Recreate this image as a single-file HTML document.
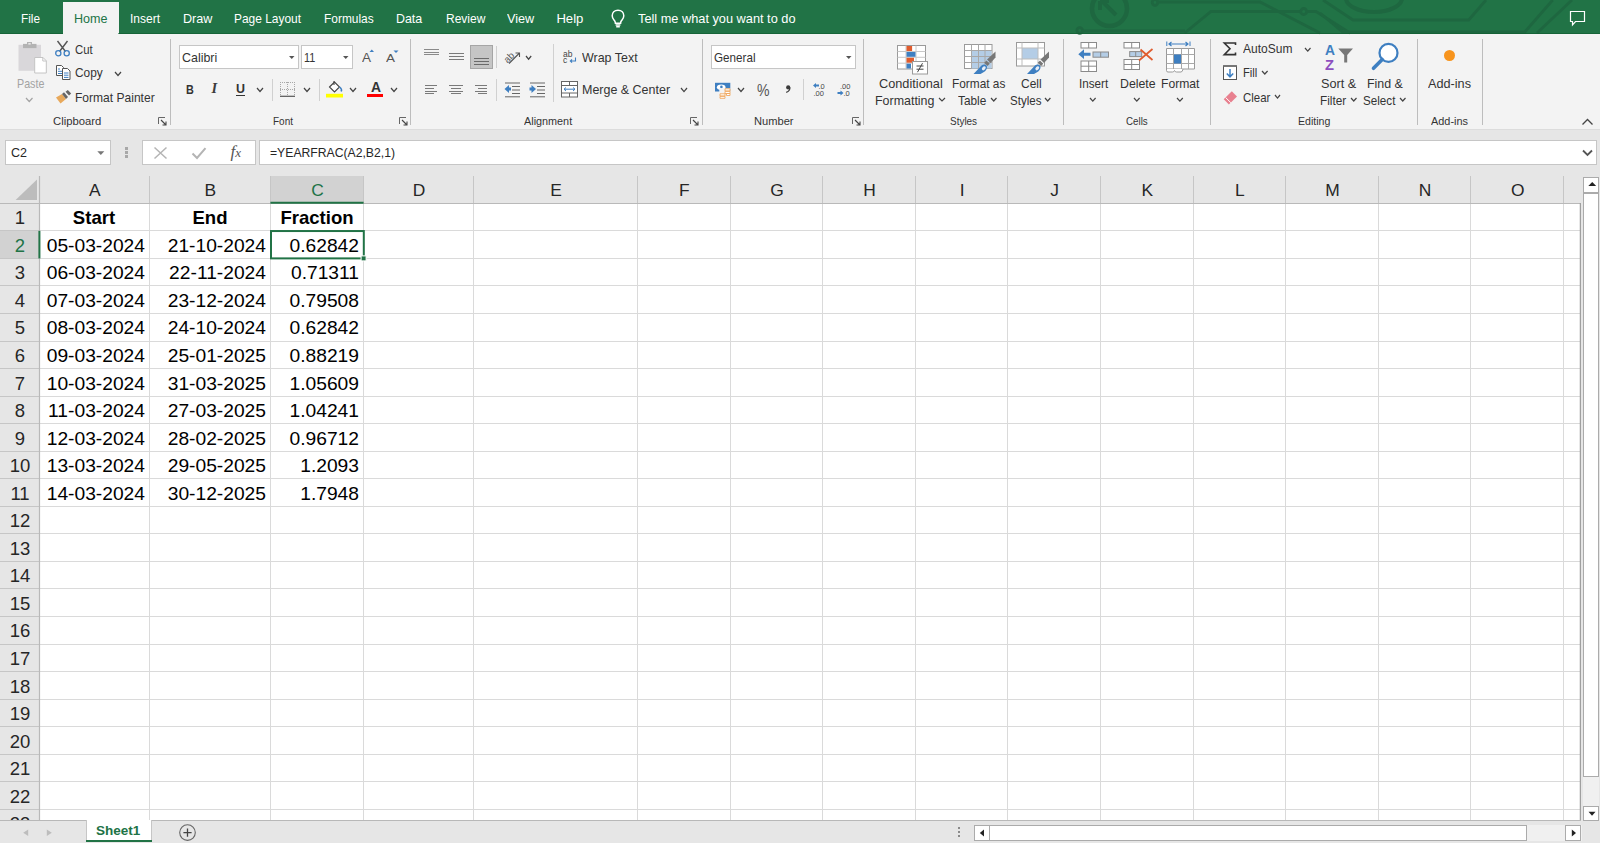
<!DOCTYPE html><html><head><meta charset="utf-8"><style>
*{box-sizing:border-box}
html,body{margin:0;padding:0}
body{width:1600px;height:843px;overflow:hidden;position:relative;background:#e6e6e6;font-family:"Liberation Sans",sans-serif;color:#262626}
.a{position:absolute}
.t{position:absolute;white-space:nowrap;line-height:1}
svg{position:absolute;overflow:visible}
</style></head><body>
<div class="a" style="left:0;top:0;width:1600px;height:33.5px;background:#217346"></div>

<div class="a" style="left:0;top:33.5px;width:1600px;height:95.5px;background:#f3f3f3"></div>
<div class="a" style="left:0;top:129px;width:1600px;height:1px;background:#dcdcdc"></div>
<div class="a" style="left:63px;top:2px;width:55.75px;height:31.5px;background:#f3f3f3"></div>
<div class="t" style="left:21.00px;top:12.00px;font-size:13.13px;color:#ffffff;transform:scaleX(0.8977);transform-origin:0 0;">File</div>
<div class="t" style="left:73.75px;top:12.00px;font-size:13.13px;color:#217346;transform:scaleX(0.9560);transform-origin:0 0;">Home</div>
<div class="t" style="left:130.00px;top:12.00px;font-size:13.13px;color:#ffffff;transform:scaleX(0.9133);transform-origin:0 0;">Insert</div>
<div class="t" style="left:182.50px;top:12.00px;font-size:13.13px;color:#ffffff;transform:scaleX(0.9609);transform-origin:0 0;">Draw</div>
<div class="t" style="left:234.00px;top:12.00px;font-size:13.13px;color:#ffffff;transform:scaleX(0.9087);transform-origin:0 0;">Page Layout</div>
<div class="t" style="left:323.60px;top:12.00px;font-size:13.13px;color:#ffffff;transform:scaleX(0.9084);transform-origin:0 0;">Formulas</div>
<div class="t" style="left:396.25px;top:12.00px;font-size:13.13px;color:#ffffff;transform:scaleX(0.9458);transform-origin:0 0;">Data</div>
<div class="t" style="left:445.50px;top:12.00px;font-size:13.13px;color:#ffffff;transform:scaleX(0.9146);transform-origin:0 0;">Review</div>
<div class="t" style="left:506.75px;top:12.00px;font-size:13.13px;color:#ffffff;transform:scaleX(0.9645);transform-origin:0 0;">View</div>
<div class="t" style="left:556.40px;top:12.00px;font-size:13.13px;color:#ffffff;">Help</div>
<div class="t" style="left:637.50px;top:12.00px;font-size:13.13px;color:#ffffff;transform:scaleX(0.9723);transform-origin:0 0;">Tell me what you want to do</div>
<svg style="left:609px;top:8px" width="18" height="20"><path d="M9 2.2 C5.4 2.2 3.2 4.8 3.2 7.8 C3.2 10.2 4.6 11.5 5.6 12.8 C6.2 13.6 6.4 14.3 6.4 15.3 L11.6 15.3 C11.6 14.3 11.8 13.6 12.4 12.8 C13.4 11.5 14.8 10.2 14.8 7.8 C14.8 4.8 12.6 2.2 9 2.2 Z" fill="none" stroke="#fff" stroke-width="1.5"/><path d="M6.6 17 L11.4 17 M7.2 18.8 L10.8 18.8" stroke="#fff" stroke-width="1.5"/></svg>
<svg style="left:0;top:0" width="1600" height="33"><g fill="none" stroke="#1e6640" stroke-width="2.8" opacity="0.9">
<circle cx="1109.5" cy="8.5" r="17.5" stroke-width="4.5"/>
<path d="M1116 15 L1101 0 M1100 1 L1100 10 M1100 1 L1109 1" stroke-width="4"/>
<circle cx="1155" cy="2.5" r="2.8"/>
<path d="M1158 2 L1260 2 L1320 33"/>
<path d="M1184.7 33 L1211 11.5 L1300.5 11.5"/>
<circle cx="1303.7" cy="11.5" r="3"/>
<path d="M1307 11.5 L1316 11.5 L1350 33"/>
<circle cx="1079.7" cy="30.5" r="2.8"/>
<path d="M1082.5 31 L1185 31"/>
<path d="M1323 0 L1353 20 L1468.7 20 L1486 0"/>
<path d="M1320 13 L1342.7 32 L1524.7 32 L1552.7 0"/>
<path d="M1537 33 L1572 0"/>
<path d="M1346 -2 A 28 14 0 0 0 1402 -2" stroke-width="4"/>
</g></svg>
<div class="a" style="left:118px;top:32.5px;width:1482px;height:1px;background:#0f5a2f;opacity:0.6"></div>
<div class="a" style="left:0;top:32.5px;width:63px;height:1px;background:#0f5a2f;opacity:0.6"></div>
<svg style="left:1568px;top:9px" width="20" height="19"><path d="M2.5 2.5 L16.5 2.5 L16.5 12.5 L7.5 12.5 L4.5 16 L4.5 12.5 L2.5 12.5 Z" fill="none" stroke="#fff" stroke-width="1.2" stroke-linejoin="miter"/></svg>
<div class="a" style="left:170px;top:39px;width:1px;height:86px;background:#bdbdbd"></div>
<div class="a" style="left:410px;top:39px;width:1px;height:86px;background:#bdbdbd"></div>
<div class="a" style="left:702px;top:39px;width:1px;height:86px;background:#bdbdbd"></div>
<div class="a" style="left:863px;top:39px;width:1px;height:86px;background:#bdbdbd"></div>
<div class="a" style="left:1063px;top:39px;width:1px;height:86px;background:#bdbdbd"></div>
<div class="a" style="left:1210px;top:39px;width:1px;height:86px;background:#bdbdbd"></div>
<div class="a" style="left:1417px;top:39px;width:1px;height:86px;background:#bdbdbd"></div>
<div class="a" style="left:1482px;top:39px;width:1px;height:86px;background:#bdbdbd"></div>
<div class="t" style="left:52.50px;top:117.00px;font-size:10.06px;color:#333;transform:scaleX(1.1226);transform-origin:0 0;">Clipboard</div>
<div class="t" style="left:272.75px;top:117.00px;font-size:10.06px;color:#333;transform:scaleX(0.9920);transform-origin:0 0;">Font</div>
<div class="t" style="left:524.00px;top:117.00px;font-size:10.06px;color:#333;transform:scaleX(1.0777);transform-origin:0 0;">Alignment</div>
<div class="t" style="left:754.40px;top:117.00px;font-size:10.06px;color:#333;transform:scaleX(1.1070);transform-origin:0 0;">Number</div>
<div class="t" style="left:949.50px;top:117.00px;font-size:10.06px;color:#333;transform:scaleX(0.9903);transform-origin:0 0;">Styles</div>
<div class="t" style="left:1125.70px;top:117.00px;font-size:10.06px;color:#333;transform:scaleX(0.9704);transform-origin:0 0;">Cells</div>
<div class="t" style="left:1297.60px;top:117.00px;font-size:10.06px;color:#333;transform:scaleX(1.0530);transform-origin:0 0;">Editing</div>
<div class="t" style="left:1431.00px;top:117.00px;font-size:10.06px;color:#333;transform:scaleX(1.0844);transform-origin:0 0;">Add-ins</div>
<svg style="left:158px;top:116.5px" width="9" height="9"><path d="M0.5 7 L0.5 0.5 L7 0.5" fill="none" stroke="#666" stroke-width="1"/><path d="M3 3 L8 8 M8 4.5 L8 8 L4.5 8" fill="none" stroke="#444" stroke-width="1.1"/></svg>
<svg style="left:399px;top:116.5px" width="9" height="9"><path d="M0.5 7 L0.5 0.5 L7 0.5" fill="none" stroke="#666" stroke-width="1"/><path d="M3 3 L8 8 M8 4.5 L8 8 L4.5 8" fill="none" stroke="#444" stroke-width="1.1"/></svg>
<svg style="left:690px;top:116.5px" width="9" height="9"><path d="M0.5 7 L0.5 0.5 L7 0.5" fill="none" stroke="#666" stroke-width="1"/><path d="M3 3 L8 8 M8 4.5 L8 8 L4.5 8" fill="none" stroke="#444" stroke-width="1.1"/></svg>
<svg style="left:852px;top:116.5px" width="9" height="9"><path d="M0.5 7 L0.5 0.5 L7 0.5" fill="none" stroke="#666" stroke-width="1"/><path d="M3 3 L8 8 M8 4.5 L8 8 L4.5 8" fill="none" stroke="#444" stroke-width="1.1"/></svg>
<svg style="left:1581px;top:118px" width="13" height="8"><path d="M1.5 6.5 L6.5 1.5 L11.5 6.5" fill="none" stroke="#444" stroke-width="1.3"/></svg>
<svg style="left:14px;top:40px" width="36" height="36">
<rect x="4.5" y="4.8" width="22.5" height="26" fill="#d9d7da"/>
<rect x="9" y="3.9" width="13.5" height="4.2" fill="#b3b3b3"/>
<rect x="13" y="2" width="5" height="3" fill="#b3b3b3"/><rect x="14.3" y="3" width="2.4" height="1.6" fill="#e8e8e8"/>
<path d="M20.7 17.5 L29 17.5 L32.3 20.8 L32.3 33 L20.7 33 Z" fill="#fff" stroke="#c4c4c4" stroke-width="1"/>
<path d="M28.8 17.5 L28.8 21 L32.3 21" fill="none" stroke="#c4c4c4" stroke-width="1"/>
</svg>
<div class="t" style="left:16.70px;top:78.00px;font-size:12.57px;color:#a3a3a3;transform:scaleX(0.8522);transform-origin:0 0;">Paste</div>
<svg style="left:25px;top:97px" width="8.5" height="5.5"><path d="M1 1 L4.25 4.5 L7.5 1" fill="none" stroke="#a3a3a3" stroke-width="1.2"/></svg>
<svg style="left:54px;top:40px" width="18" height="18">
<path d="M3.5 1 L11.5 11.5 M13.5 1 L5.5 11.5" stroke="#555" stroke-width="1.4"/>
<circle cx="4.3" cy="13.2" r="2.6" fill="none" stroke="#3e7fc1" stroke-width="1.3"/>
<circle cx="12.7" cy="13.2" r="2.6" fill="none" stroke="#3e7fc1" stroke-width="1.3"/>
</svg>
<div class="t" style="left:75.30px;top:44.00px;font-size:12.57px;color:#333333;transform:scaleX(0.9039);transform-origin:0 0;">Cut</div>
<svg style="left:55px;top:64px" width="17" height="18">
<path d="M1.5 1.5 L6.5 1.5 L8.5 3.5 L8.5 11.5 L1.5 11.5 Z" fill="#fff" stroke="#555" stroke-width="1"/>
<path d="M3 5 L5 5 M3 7.3 L7 7.3 M3 9.5 L7 9.5" stroke="#3e7fc1" stroke-width="1"/>
<path d="M7.5 4.5 L12.5 4.5 L15 7 L15 15.5 L7.5 15.5 Z" fill="#fff" stroke="#555" stroke-width="1"/>
<path d="M9 9 L13.5 9 M9 11.2 L13.5 11.2 M9 13.4 L13.5 13.4" stroke="#3e7fc1" stroke-width="1"/>
</svg>
<div class="t" style="left:75.30px;top:67.00px;font-size:12.57px;color:#333333;transform:scaleX(0.9439);transform-origin:0 0;">Copy</div>
<svg style="left:113.5px;top:70.5px" width="8" height="5.5"><path d="M1 1 L4.0 4.5 L7 1" fill="none" stroke="#444" stroke-width="1.2"/></svg>
<svg style="left:55px;top:89px" width="18" height="16">
<path d="M1 8.5 L7 5 L11 10 L5.5 14.5 Z" fill="#e8a95c"/>
<path d="M7 5 L11 10 L13 8 L9 3.2 Z" fill="#666"/>
<path d="M10.5 2.8 L14 6.5 L16.2 4.5 L12.8 0.9 Z" fill="#666"/>
</svg>
<div class="t" style="left:75.30px;top:92.00px;font-size:12.57px;color:#333333;transform:scaleX(0.9587);transform-origin:0 0;">Format Painter</div>
<div class="a" style="left:179.3px;top:45.3px;width:120px;height:23.4px;background:#fff;border:1px solid #c6c6c6"></div>
<div class="t" style="left:182.00px;top:52.00px;font-size:12.57px;color:#333333;transform:scaleX(0.9900);transform-origin:0 0;">Calibri</div>
<svg style="left:289.25px;top:55.5px" width="5.5" height="3"><path d="M0 0 L5.5 0 L2.75 3 Z" fill="#555"/></svg>
<div class="a" style="left:301.4px;top:45.3px;width:51.3px;height:23.4px;background:#fff;border:1px solid #c6c6c6"></div>
<div class="t" style="left:304.25px;top:52.00px;font-size:12.57px;color:#333333;transform:scaleX(0.8607);transform-origin:0 0;">11</div>
<svg style="left:342.5px;top:55.5px" width="5.5" height="3"><path d="M0 0 L5.5 0 L2.75 3 Z" fill="#555"/></svg>
<div class="t" style="left:362.00px;top:52.00px;font-size:12.57px;color:#555;transform:scaleX(1.0761);transform-origin:0 0;">A</div>
<svg style="left:369px;top:49px" width="6" height="4"><path d="M0.5 3 L2.8 0.5 L5 3 Z" fill="#3e7fc1"/></svg>
<div class="t" style="left:386.00px;top:53.00px;font-size:10.68px;color:#555;transform:scaleX(1.2606);transform-origin:0 0;">A</div>
<svg style="left:392.5px;top:49.5px" width="6" height="4"><path d="M0.5 0.5 L5.5 0.5 L3 3 Z" fill="#3e7fc1"/></svg>
<div class="t" style="left:186.20px;top:83.00px;font-size:13.62px;color:#333;font-weight:bold;transform:scaleX(0.7949);transform-origin:0 0;">B</div>
<div class="t" style="left:211.5px;top:81px;font-size:14.5px;font-family:'Liberation Serif',serif;font-style:italic;font-weight:bold;color:#3a3a3a">I</div>
<div class="t" style="left:236.00px;top:83.00px;font-size:12.01px;color:#333;font-weight:bold;transform:scaleX(1.0395);transform-origin:0 0;">U</div>
<div class="a" style="left:236px;top:95.2px;width:9px;height:1.3px;background:#333"></div>
<svg style="left:255.7px;top:86.8px" width="8" height="5.5"><path d="M1 1 L4.0 4.5 L7 1" fill="none" stroke="#444" stroke-width="1.2"/></svg>
<div class="a" style="left:272.25px;top:78.75px;width:1px;height:21.75px;background:#d0d0d0"></div>
<svg style="left:280px;top:81.5px" width="15" height="15">
<path d="M0 0.5 L15 0.5 M14.5 0 L14.5 14 M0.5 0 L0.5 14 M7.5 0 L7.5 14 M0 7.5 L15 7.5" fill="none" stroke="#a8a8a8" stroke-width="1" stroke-dasharray="1 1" shape-rendering="crispEdges"/>
<path d="M0 14.3 L15 14.3" stroke="#555" stroke-width="1.2"/>
</svg>
<svg style="left:302.5px;top:86.8px" width="8" height="5.5"><path d="M1 1 L4.0 4.5 L7 1" fill="none" stroke="#444" stroke-width="1.2"/></svg>
<div class="a" style="left:318.75px;top:78.75px;width:1px;height:21.75px;background:#d0d0d0"></div>
<svg style="left:326px;top:80px" width="18" height="18">
<path d="M3.5 7 L8.5 2 L13.5 7 L8.5 12 Z" fill="#fff" stroke="#444" stroke-width="1.1"/>
<path d="M8 1 L8 5" stroke="#444" stroke-width="1.1"/>
<path d="M13.5 7 C15.5 8.5 16 10 15.2 11.5" fill="none" stroke="#3e7fc1" stroke-width="1.5"/>
<rect x="0" y="13.8" width="17" height="3.7" fill="#ffff00"/>
</svg>
<svg style="left:349px;top:86.8px" width="8" height="5.5"><path d="M1 1 L4.0 4.5 L7 1" fill="none" stroke="#444" stroke-width="1.2"/></svg>
<div class="t" style="left:370.50px;top:81.00px;font-size:13.97px;color:#333;font-weight:bold;transform:scaleX(0.9939);transform-origin:0 0;">A</div>
<div class="a" style="left:367px;top:93.8px;width:16.4px;height:3.7px;background:#ff0000"></div>
<svg style="left:390.25px;top:86.8px" width="8" height="5.5"><path d="M1 1 L4.0 4.5 L7 1" fill="none" stroke="#444" stroke-width="1.2"/></svg>
<div class="a" style="left:424.00px;top:49.00px;width:15px;height:1px;background:#8a8a8a"></div><div class="a" style="left:424.00px;top:51.60px;width:15px;height:1px;background:#8a8a8a"></div><div class="a" style="left:424.00px;top:54.20px;width:15px;height:1px;background:#8a8a8a"></div>
<div class="a" style="left:449.00px;top:53.00px;width:15px;height:1px;background:#7a7a7a"></div><div class="a" style="left:449.00px;top:56.20px;width:15px;height:1px;background:#7a7a7a"></div><div class="a" style="left:449.00px;top:59.40px;width:15px;height:1px;background:#7a7a7a"></div>
<div class="a" style="left:470px;top:45px;width:23px;height:24px;background:#c5c5c5;border:1px solid #a5a5a5"></div>
<div class="a" style="left:474.00px;top:58.00px;width:15px;height:1px;background:#6a6a6a"></div><div class="a" style="left:474.00px;top:60.80px;width:15px;height:1px;background:#6a6a6a"></div><div class="a" style="left:474.00px;top:63.60px;width:15px;height:1px;background:#6a6a6a"></div>
<div class="a" style="left:496.10px;top:46.3px;width:1px;height:21.60000000000001px;background:#d0d0d0"></div>
<svg style="left:503px;top:49px" width="18" height="15">
<text x="0.5" y="12" font-family="Liberation Sans" font-size="9.5" fill="#555" transform="rotate(-45 5.5 8.5)">ab</text>
<path d="M6 14.5 L16 4.5 M12.5 4 L16.5 4 L16.5 8" fill="none" stroke="#555" stroke-width="1.1"/>
</svg>
<svg style="left:524.9px;top:54.7px" width="7.2" height="5.2"><path d="M1 1 L3.6 4.2 L6.2 1" fill="none" stroke="#444" stroke-width="1.2"/></svg>
<div class="a" style="left:553.30px;top:44.4px;width:1px;height:57.199999999999996px;background:#d0d0d0"></div>
<svg style="left:563px;top:49px" width="15" height="16">
<text x="0" y="7.5" font-family="Liberation Sans" font-size="8.5" fill="#444">ab</text>
<text x="0" y="14.3" font-family="Liberation Sans" font-size="8.5" fill="#444">c</text>
<path d="M12.5 8.5 L12.5 12 L7.5 12 M9 10.3 L7.3 12 L9 13.7" fill="none" stroke="#3e7fc1" stroke-width="1.1"/>
</svg>
<div class="t" style="left:581.60px;top:52.00px;font-size:12.57px;color:#333333;transform:scaleX(0.9913);transform-origin:0 0;">Wrap Text</div>
<div class="a" style="left:425.00px;top:85.00px;width:12px;height:1px;background:#7a7a7a"></div><div class="a" style="left:425.00px;top:87.80px;width:9px;height:1px;background:#7a7a7a"></div><div class="a" style="left:425.00px;top:90.60px;width:12px;height:1px;background:#7a7a7a"></div><div class="a" style="left:425.00px;top:93.40px;width:9px;height:1px;background:#7a7a7a"></div>
<div class="a" style="left:449.40px;top:85.00px;width:13.6px;height:1px;background:#7a7a7a"></div><div class="a" style="left:451.20px;top:87.80px;width:10px;height:1px;background:#7a7a7a"></div><div class="a" style="left:449.40px;top:90.60px;width:13.6px;height:1px;background:#7a7a7a"></div><div class="a" style="left:451.20px;top:93.40px;width:10px;height:1px;background:#7a7a7a"></div>
<div class="a" style="left:475.25px;top:85.00px;width:12px;height:1px;background:#7a7a7a"></div><div class="a" style="left:478.25px;top:87.80px;width:9px;height:1px;background:#7a7a7a"></div><div class="a" style="left:475.25px;top:90.60px;width:12px;height:1px;background:#7a7a7a"></div><div class="a" style="left:478.25px;top:93.40px;width:9px;height:1px;background:#7a7a7a"></div>
<div class="a" style="left:496.10px;top:78.75px;width:1px;height:21.950000000000003px;background:#d0d0d0"></div>
<svg style="left:504px;top:81.5px" width="17" height="16">
<path d="M0.5 7 L5 3 L5 5.5 L7 5.5 L7 8.5 L5 8.5 L5 11 Z" fill="#3e7fc1"/>
<path d="M1 1 L16 1 M8 4.5 L16 4.5 M8 8 L16 8 M8 11.5 L16 11.5 M1 14.8 L16 14.8" stroke="#666" stroke-width="1"/>
</svg>
<svg style="left:529px;top:81.5px" width="17" height="16">
<path d="M7 7 L2.5 3 L2.5 5.5 L0.5 5.5 L0.5 8.5 L2.5 8.5 L2.5 11 Z" fill="#3e7fc1"/>
<path d="M1 1 L16 1 M8 4.5 L16 4.5 M8 8 L16 8 M8 11.5 L16 11.5 M1 14.8 L16 14.8" stroke="#666" stroke-width="1"/>
</svg>
<svg style="left:560.5px;top:80.5px" width="18" height="17">
<rect x="0.5" y="0.5" width="16" height="15.5" fill="#fff" stroke="#666" stroke-width="1"/>
<path d="M0.5 4.5 L16.5 4.5 M0.5 12 L16.5 12 M8.5 0.5 L8.5 4.5 M8.5 12 L8.5 16" stroke="#666" stroke-width="1"/>
<path d="M3 8.2 L14 8.2 M5 6.5 L3 8.2 L5 10 M12 6.5 L14 8.2 L12 10" fill="none" stroke="#3e7fc1" stroke-width="1"/>
</svg>
<div class="t" style="left:581.60px;top:84.00px;font-size:12.57px;color:#333333;transform:scaleX(0.9928);transform-origin:0 0;">Merge &amp; Center</div>
<svg style="left:680.3px;top:87px" width="8" height="5.6"><path d="M1 1 L4.0 4.6 L7 1" fill="none" stroke="#444" stroke-width="1.2"/></svg>
<div class="a" style="left:711px;top:45.1px;width:144.6px;height:23.65px;background:#fff;border:1px solid #c6c6c6"></div>
<div class="t" style="left:713.50px;top:52.00px;font-size:12.57px;color:#333333;transform:scaleX(0.9280);transform-origin:0 0;">General</div>
<svg style="left:845.6px;top:55.75px" width="5.5" height="3"><path d="M0 0 L5.5 0 L2.75 3 Z" fill="#555"/></svg>
<svg style="left:713.5px;top:81.5px" width="18" height="17">
<rect x="1" y="0.8" width="15.3" height="8.7" fill="#3e7fc1"/>
<ellipse cx="7.2" cy="5.2" rx="4.3" ry="2.6" fill="#fff"/>
<circle cx="7.4" cy="4.9" r="1.3" fill="#3e7fc1"/>
<rect x="5.3" y="6.3" width="11.2" height="10.5" fill="#f3f3f3"/>
<path d="M11 6.8 L16 6.8 L16 9 L11 9 Z M11 9.3 L16 9.3 L16 11.5 L11 11.5 Z M6 11.8 L11 11.8 L11 14 L6 14 Z M6 14.3 L11 14.3 L11 16.3 L6 16.3 Z M12.5 11.5 L16 11.5 L16 13.5 L12.5 13.5 Z" fill="#fff" stroke="#f0a860" stroke-width="0.9"/>
</svg>
<svg style="left:737px;top:86.9px" width="8" height="5.5"><path d="M1 1 L4.0 4.5 L7 1" fill="none" stroke="#444" stroke-width="1.2"/></svg>
<div class="t" style="left:757.00px;top:82.00px;font-size:16.06px;color:#555;transform:scaleX(0.8766);transform-origin:0 0;">%</div>
<svg style="left:785px;top:85px" width="6" height="8"><circle cx="3.2" cy="2.4" r="2.1" fill="#3a3a3a"/><path d="M4.9 2.6 C5 5 3.5 6.6 1.2 7.3" fill="none" stroke="#3a3a3a" stroke-width="1.3"/></svg>
<div class="a" style="left:803.00px;top:78.5px;width:1px;height:21.900000000000006px;background:#d0d0d0"></div>
<svg style="left:812px;top:82px" width="15" height="15">
<path d="M1 3.5 L4 1 L4 2.6 L7 2.6 L7 4.4 L4 4.4 L4 6 Z" fill="#3e7fc1"/>
<text x="6.5" y="6.8" font-family="Liberation Sans" font-size="7.5" fill="#444">.0</text>
<text x="1.5" y="14" font-family="Liberation Sans" font-size="7.5" fill="#444">.00</text>
</svg>
<svg style="left:837px;top:82px" width="15" height="15">
<text x="3" y="6.8" font-family="Liberation Sans" font-size="7.5" fill="#444">.00</text>
<path d="M6.5 11 L3.5 8.5 L3.5 10.1 L0.5 10.1 L0.5 11.9 L3.5 11.9 L3.5 13.5 Z" fill="#3e7fc1"/>
<text x="6.5" y="14" font-family="Liberation Sans" font-size="7.5" fill="#444">.0</text>
</svg>
<svg style="left:896.5px;top:44.5px" width="33" height="30">
<rect x="0.5" y="0.5" width="28" height="23.5" fill="#fff" stroke="#9a9a9a" stroke-width="1"/>
<path d="M0.5 6.5 L28.5 6.5 M0.5 12.3 L28.5 12.3 M0.5 18.2 L28.5 18.2 M9 0.5 L9 24 M19 0.5 L19 24" stroke="#c8c8c8" stroke-width="1"/>
<rect x="9.5" y="1" width="5.6" height="5" fill="#e05c2e"/>
<rect x="9.5" y="7" width="9" height="4.8" fill="#3e7fc1"/>
<rect x="9.5" y="12.8" width="7.5" height="4.9" fill="#e05c2e"/>
<rect x="9.5" y="18.7" width="4.5" height="4.8" fill="#3e7fc1"/>
<rect x="15.5" y="16.5" width="15" height="12.5" fill="#fff" stroke="#9a9a9a" stroke-width="1"/>
<path d="M19.5 21 L26.5 21 M19.5 24.2 L26.5 24.2 M20.5 27.2 L25.5 18.2" stroke="#444" stroke-width="1"/>
</svg>
<div class="t" style="left:878.50px;top:78.00px;font-size:12.57px;color:#333333;transform:scaleX(1.0135);transform-origin:0 0;">Conditional</div>
<div class="t" style="left:874.75px;top:95.00px;font-size:12.57px;color:#333333;transform:scaleX(0.9901);transform-origin:0 0;">Formatting</div>
<svg style="left:938px;top:97px" width="8" height="5"><path d="M1 1 L4.0 4 L7 1" fill="none" stroke="#444" stroke-width="1.2"/></svg>
<svg style="left:963.5px;top:43.5px" width="34" height="31">
<rect x="0.5" y="0.5" width="27.5" height="24" fill="#fff" stroke="#9a9a9a" stroke-width="1"/>
<rect x="7.5" y="7" width="20" height="17.5" fill="#b4cde6"/>
<path d="M0.5 6.5 L28 6.5 M0.5 12.5 L28 12.5 M0.5 18.5 L28 18.5 M7.5 0.5 L7.5 24.5 M14.5 0.5 L14.5 24.5 M21 0.5 L21 24.5" stroke="#a8a8a8" stroke-width="1"/>
<path d="M31.5 7.5 L31.5 13.5 L26.5 19 L23 15.5 Z" fill="#777"/>
<path d="M25.8 19.8 L23.5 22 L20.2 18.7 L22.5 16.4 Z" fill="#777"/>
<path d="M9.5 30 L17.5 21.5 C19.5 19.6 22.6 20.2 23 22.8 C23.3 25 21.8 27 19.5 28.3 L16.5 30 Z" fill="#3e7fc1"/>
<ellipse cx="19.8" cy="24.3" rx="1.6" ry="2.3" transform="rotate(40 19.8 24.3)" fill="#e8eef6"/>
</svg>
<div class="t" style="left:951.60px;top:78.00px;font-size:12.57px;color:#333333;transform:scaleX(0.9436);transform-origin:0 0;">Format as</div>
<div class="t" style="left:958.25px;top:95.00px;font-size:12.57px;color:#333333;transform:scaleX(0.9435);transform-origin:0 0;">Table</div>
<svg style="left:990.4px;top:97px" width="7.5" height="5"><path d="M1 1 L3.75 4 L6.5 1" fill="none" stroke="#444" stroke-width="1.2"/></svg>
<svg style="left:1015.5px;top:41.5px" width="34" height="33">
<rect x="0.5" y="0.5" width="28" height="23.5" fill="#fff" stroke="#9a9a9a" stroke-width="1"/>
<rect x="6" y="6" width="16" height="11" fill="#b4cde6"/>
<path d="M0.5 6 L28.5 6 M0.5 17 L28.5 17 M6 0.5 L6 24 M22 0.5 L22 24" stroke="#bdbdbd" stroke-width="1"/>
<path d="M33 9.5 L33 15.5 L28 21 L24.5 17.5 Z" fill="#777"/>
<path d="M27.3 21.8 L25 24 L21.7 20.7 L24 18.4 Z" fill="#777"/>
<path d="M11 32 L19 23.5 C21 21.6 24.1 22.2 24.5 24.8 C24.8 27 23.3 29 21 30.3 L18 32 Z" fill="#3e7fc1"/>
<ellipse cx="21.3" cy="26.3" rx="1.6" ry="2.3" transform="rotate(40 21.3 26.3)" fill="#e8eef6"/>
</svg>
<div class="t" style="left:1021.00px;top:78.00px;font-size:12.57px;color:#333333;transform:scaleX(0.9522);transform-origin:0 0;">Cell</div>
<div class="t" style="left:1009.50px;top:95.00px;font-size:12.57px;color:#333333;transform:scaleX(0.9196);transform-origin:0 0;">Styles</div>
<svg style="left:1044.4px;top:97px" width="7.4" height="5"><path d="M1 1 L3.7 4 L6.4 1" fill="none" stroke="#444" stroke-width="1.2"/></svg>
<svg style="left:1077.5px;top:42px" width="32" height="31">
<rect x="3" y="0.5" width="15.5" height="5.5" fill="#fff" stroke="#8a8a8a" stroke-width="1"/><path d="M10.7 0.5 L10.7 6" stroke="#8a8a8a"/>
<path d="M0.3 12.2 L6 7.3 L6 10.7 L12.5 10.7 L12.5 13.7 L6 13.7 L6 17 Z" fill="#3e7fc1"/>
<rect x="15" y="10" width="15.5" height="5.2" fill="#b4cde6" stroke="#8a8a8a" stroke-width="1"/><path d="M22.7 10 L22.7 15.2" stroke="#8a8a8a"/>
<rect x="3" y="19" width="15.5" height="10.5" fill="#fff" stroke="#8a8a8a" stroke-width="1"/><path d="M10.7 19 L10.7 29.5 M3 24.2 L18.5 24.2" stroke="#8a8a8a"/>
</svg>
<div class="t" style="left:1079.20px;top:78.00px;font-size:12.57px;color:#333333;transform:scaleX(0.9285);transform-origin:0 0;">Insert</div>
<svg style="left:1089.3px;top:97px" width="7.6" height="5.2"><path d="M1 1 L3.8 4.2 L6.6 1" fill="none" stroke="#444" stroke-width="1.2"/></svg>
<svg style="left:1123px;top:42px" width="32" height="31">
<rect x="1" y="0.5" width="15.5" height="5.5" fill="#fff" stroke="#8a8a8a" stroke-width="1"/><path d="M8.7 0.5 L8.7 6" stroke="#8a8a8a"/>
<rect x="6.7" y="9.6" width="12" height="5" fill="#b4cde6" stroke="#8a8a8a" stroke-width="1"/><path d="M12.7 9.6 L12.7 14.6" stroke="#8a8a8a"/>
<rect x="1" y="17.5" width="15.5" height="10" fill="#fff" stroke="#8a8a8a" stroke-width="1"/><path d="M8.7 17.5 L8.7 27.5 M1 22.5 L16.5 22.5" stroke="#8a8a8a"/>
<path d="M16 18.5 L29.5 7 M17.5 7.5 L29.5 18" stroke="#e05c2e" stroke-width="1.7"/>
</svg>
<div class="t" style="left:1119.50px;top:78.00px;font-size:12.57px;color:#333333;transform:scaleX(0.9819);transform-origin:0 0;">Delete</div>
<svg style="left:1132.8px;top:97px" width="7.6" height="5.2"><path d="M1 1 L3.8 4.2 L6.6 1" fill="none" stroke="#444" stroke-width="1.2"/></svg>
<svg style="left:1166px;top:41px" width="30" height="33">
<path d="M0.8 0.5 L0.8 5 M24 0.5 L24 5" stroke="#3e7fc1" stroke-width="1"/>
<path d="M3 3 L22 3 M5.5 1 L3 3 L5.5 5 M19.5 1 L22 3 L19.5 5" fill="none" stroke="#3e7fc1" stroke-width="1.2"/>
<path d="M0.5 7.5 L28.5 7.5 L28.5 28 L0.5 28 Z" fill="#fff" stroke="#9a9a9a" stroke-width="1"/>
<path d="M0.5 28 L0.5 29.5 Q0.5 31 2 31 L6.5 31 Q8 31 8.5 29.5 Q9 31 10.5 31 L15 31 Q16.5 31 17 28" fill="#fff" stroke="#9a9a9a" stroke-width="1"/>
<path d="M0.5 13.5 L28.5 13.5 M0.5 22.5 L28.5 22.5 M7.5 7.5 L7.5 28 M15.5 7.5 L15.5 28 M22.5 7.5 L22.5 28" stroke="#a8a8a8" stroke-width="1"/>
<rect x="8" y="13.5" width="7" height="9" fill="#3e7fc1"/>
</svg>
<div class="t" style="left:1160.80px;top:78.00px;font-size:12.57px;color:#333333;transform:scaleX(0.9670);transform-origin:0 0;">Format</div>
<svg style="left:1176px;top:97px" width="7.8" height="5.2"><path d="M1 1 L3.9 4.2 L6.8 1" fill="none" stroke="#444" stroke-width="1.2"/></svg>
<svg style="left:1223px;top:41.5px" width="14" height="14"><path d="M12.5 3 L12.5 1 L1.3 1 L7 6.8 L1.3 12.6 L12.5 12.6 L12.5 10.6" fill="none" stroke="#333" stroke-width="1.6"/></svg>
<div class="t" style="left:1242.60px;top:43.00px;font-size:12.57px;color:#333333;transform:scaleX(0.9559);transform-origin:0 0;">AutoSum</div>
<svg style="left:1303.5px;top:46.5px" width="7.5" height="5.2"><path d="M1 1 L3.75 4.2 L6.5 1" fill="none" stroke="#444" stroke-width="1.2"/></svg>
<svg style="left:1223px;top:65px" width="14" height="15">
<rect x="0.5" y="0.8" width="13" height="13.7" fill="#fff" stroke="#555" stroke-width="1"/>
<path d="M0.5 1 L13.5 1" stroke="#777" stroke-width="2"/>
<path d="M7 4 L7 11.5 M3.8 8.5 L7 11.8 L10.2 8.5" fill="none" stroke="#3e7fc1" stroke-width="1.5"/>
</svg>
<div class="t" style="left:1242.60px;top:67.00px;font-size:12.57px;color:#333333;transform:scaleX(0.8958);transform-origin:0 0;">Fill</div>
<svg style="left:1261.4px;top:69.75px" width="7.6" height="5"><path d="M1 1 L3.8 4 L6.6 1" fill="none" stroke="#444" stroke-width="1.2"/></svg>
<svg style="left:1223px;top:90px" width="15" height="14">
<path d="M0.7 9.3 L8.8 1.2 L14 6.4 L5.9 14.5 Z" fill="#e8808f"/>
<path d="M2.6 7.5 L7.8 12.7" stroke="#fff" stroke-width="1"/>
</svg>
<div class="t" style="left:1242.60px;top:92.00px;font-size:12.57px;color:#333333;transform:scaleX(0.9119);transform-origin:0 0;">Clear</div>
<svg style="left:1274px;top:93.75px" width="7" height="5.1"><path d="M1 1 L3.5 4.1 L6 1" fill="none" stroke="#444" stroke-width="1.2"/></svg>
<div class="t" style="left:1325.00px;top:42.00px;font-size:15.36px;color:#3e7fc1;font-weight:bold;transform:scaleX(0.9001);transform-origin:0 0;">A</div>
<div class="t" style="left:1325.00px;top:57.00px;font-size:15.01px;color:#8e4fbf;font-weight:bold;transform:scaleX(0.9827);transform-origin:0 0;">Z</div>
<svg style="left:1338px;top:48px" width="16" height="16"><path d="M0.3 0.5 L15 0.5 L9.2 7 L9.2 14.5 L6.2 14.5 L6.2 7 Z" fill="#777"/></svg>
<div class="t" style="left:1320.75px;top:78.00px;font-size:12.57px;color:#333333;transform:scaleX(1.0099);transform-origin:0 0;">Sort &amp;</div>
<div class="t" style="left:1319.50px;top:95.00px;font-size:12.57px;color:#333333;transform:scaleX(0.9394);transform-origin:0 0;">Filter</div>
<svg style="left:1349.5px;top:97px" width="7.5" height="5"><path d="M1 1 L3.75 4 L6.5 1" fill="none" stroke="#444" stroke-width="1.2"/></svg>
<svg style="left:1370px;top:40px" width="32" height="32"><circle cx="18.5" cy="12.9" r="9" fill="#fff" stroke="#3e7fc1" stroke-width="2.2"/><path d="M12.2 19.5 L3.5 28.3" stroke="#3e7fc1" stroke-width="3.6" stroke-linecap="round"/></svg>
<div class="t" style="left:1366.75px;top:78.00px;font-size:12.57px;color:#333333;transform:scaleX(0.9874);transform-origin:0 0;">Find &amp;</div>
<div class="t" style="left:1362.60px;top:95.00px;font-size:12.57px;color:#333333;transform:scaleX(0.9269);transform-origin:0 0;">Select</div>
<svg style="left:1399px;top:97px" width="7.5" height="5"><path d="M1 1 L3.75 4 L6.5 1" fill="none" stroke="#444" stroke-width="1.2"/></svg>
<div class="a" style="left:1443.5px;top:50px;width:11px;height:11px;border-radius:50%;background:#f7941d"></div>
<div class="t" style="left:1428.00px;top:78.00px;font-size:12.57px;color:#333333;transform:scaleX(1.0090);transform-origin:0 0;">Add-ins</div>
<div class="a" style="left:5px;top:140px;width:105.5px;height:24.5px;background:#fff;border:1px solid #c6c6c6"></div>
<div class="t" style="left:11px;top:146.5px;font-size:12.5px;color:#262626">C2</div>
<svg style="left:97px;top:151px" width="8" height="5"><path d="M0.3 0.3 L7.3 0.3 L3.8 4 Z" fill="#777"/></svg>
<div class="a" style="left:125px;top:147px;width:2.5px;height:2.5px;background:#a8a8a8;box-shadow:0 4px 0 #a8a8a8,0 8px 0 #a8a8a8"></div>
<div class="a" style="left:142px;top:140px;width:113.5px;height:24.5px;background:#fff;border:1px solid #c6c6c6"></div>
<div class="a" style="left:259px;top:140px;width:1338px;height:24.5px;background:#fff;border:1px solid #c6c6c6"></div>
<div class="t" style="left:270px;top:146.5px;font-size:12.2px;color:#262626">=YEARFRAC(A2,B2,1)</div>
<svg style="left:153px;top:146px" width="16" height="14"><path d="M1.5 1.5 L13.5 12.5 M13.5 1.5 L1.5 12.5" stroke="#b4b4b4" stroke-width="1.5"/></svg>
<svg style="left:190px;top:146px" width="18" height="14"><path d="M2.5 7.5 L7 12 L15.5 2.2" stroke="#b4b4b4" stroke-width="2" fill="none"/></svg>
<div class="t" style="left:230.5px;top:143px;font-size:17px;font-family:'Liberation Serif',serif;font-style:italic;color:#555">f<span style="font-size:13px">x</span></div>
<svg style="left:1582px;top:149px" width="12" height="8"><path d="M1 1.5 L5.5 6 L10 1.5" stroke="#555" stroke-width="1.8" fill="none"/></svg>
<div class="a" style="left:0;top:176px;width:1580.60px;height:27.3px;background:#e6e6e6"></div>
<svg style="left:15px;top:178px" width="24" height="24"><path d="M22 1.4 L22 22 L0.6 22 Z" fill="#bcbcbc"/></svg>
<div class="a" style="left:270.40px;top:176px;width:93.20px;height:27.3px;background:#d2d2d2"></div>
<div class="t" style="left:54.90px;width:80px;text-align:center;top:182px;font-size:17.4px;color:#262626">A</div>
<div class="t" style="left:170.40px;width:80px;text-align:center;top:182px;font-size:17.4px;color:#262626">B</div>
<div class="t" style="left:277.50px;width:80px;text-align:center;top:182px;font-size:17.4px;color:#217346">C</div>
<div class="t" style="left:379.05px;width:80px;text-align:center;top:182px;font-size:17.4px;color:#262626">D</div>
<div class="t" style="left:516.00px;width:80px;text-align:center;top:182px;font-size:17.4px;color:#262626">E</div>
<div class="t" style="left:644.30px;width:80px;text-align:center;top:182px;font-size:17.4px;color:#262626">F</div>
<div class="t" style="left:736.90px;width:80px;text-align:center;top:182px;font-size:17.4px;color:#262626">G</div>
<div class="t" style="left:829.50px;width:80px;text-align:center;top:182px;font-size:17.4px;color:#262626">H</div>
<div class="t" style="left:922.10px;width:80px;text-align:center;top:182px;font-size:17.4px;color:#262626">I</div>
<div class="t" style="left:1014.70px;width:80px;text-align:center;top:182px;font-size:17.4px;color:#262626">J</div>
<div class="t" style="left:1107.30px;width:80px;text-align:center;top:182px;font-size:17.4px;color:#262626">K</div>
<div class="t" style="left:1199.90px;width:80px;text-align:center;top:182px;font-size:17.4px;color:#262626">L</div>
<div class="t" style="left:1292.50px;width:80px;text-align:center;top:182px;font-size:17.4px;color:#262626">M</div>
<div class="t" style="left:1385.10px;width:80px;text-align:center;top:182px;font-size:17.4px;color:#262626">N</div>
<div class="t" style="left:1477.70px;width:80px;text-align:center;top:182px;font-size:17.4px;color:#262626">O</div>
<div class="a" style="left:0;top:203.30px;width:39.4px;height:617.30px;background:#e6e6e6"></div>
<div class="a" style="left:0;top:230.85px;width:39.4px;height:27.5px;background:#d2d2d2"></div>
<div class="t" style="left:0;width:40px;text-align:center;top:209px;font-size:18.5px;color:#262626">1</div>
<div class="t" style="left:0;width:40px;text-align:center;top:237px;font-size:18.5px;color:#217346">2</div>
<div class="t" style="left:0;width:40px;text-align:center;top:264px;font-size:18.5px;color:#262626">3</div>
<div class="t" style="left:0;width:40px;text-align:center;top:292px;font-size:18.5px;color:#262626">4</div>
<div class="t" style="left:0;width:40px;text-align:center;top:319px;font-size:18.5px;color:#262626">5</div>
<div class="t" style="left:0;width:40px;text-align:center;top:347px;font-size:18.5px;color:#262626">6</div>
<div class="t" style="left:0;width:40px;text-align:center;top:375px;font-size:18.5px;color:#262626">7</div>
<div class="t" style="left:0;width:40px;text-align:center;top:402px;font-size:18.5px;color:#262626">8</div>
<div class="t" style="left:0;width:40px;text-align:center;top:430px;font-size:18.5px;color:#262626">9</div>
<div class="t" style="left:0;width:40px;text-align:center;top:457px;font-size:18.5px;color:#262626">10</div>
<div class="t" style="left:0;width:40px;text-align:center;top:485px;font-size:18.5px;color:#262626">11</div>
<div class="t" style="left:0;width:40px;text-align:center;top:512px;font-size:18.5px;color:#262626">12</div>
<div class="t" style="left:0;width:40px;text-align:center;top:540px;font-size:18.5px;color:#262626">13</div>
<div class="t" style="left:0;width:40px;text-align:center;top:567px;font-size:18.5px;color:#262626">14</div>
<div class="t" style="left:0;width:40px;text-align:center;top:595px;font-size:18.5px;color:#262626">15</div>
<div class="t" style="left:0;width:40px;text-align:center;top:622px;font-size:18.5px;color:#262626">16</div>
<div class="t" style="left:0;width:40px;text-align:center;top:650px;font-size:18.5px;color:#262626">17</div>
<div class="t" style="left:0;width:40px;text-align:center;top:678px;font-size:18.5px;color:#262626">18</div>
<div class="t" style="left:0;width:40px;text-align:center;top:705px;font-size:18.5px;color:#262626">19</div>
<div class="t" style="left:0;width:40px;text-align:center;top:733px;font-size:18.5px;color:#262626">20</div>
<div class="t" style="left:0;width:40px;text-align:center;top:760px;font-size:18.5px;color:#262626">21</div>
<div class="t" style="left:0;width:40px;text-align:center;top:788px;font-size:18.5px;color:#262626">22</div>
<div class="t" style="left:0;width:40px;text-align:center;top:815px;font-size:18.5px;color:#262626">23</div>
<div class="a" style="left:39.4px;top:203.30px;width:1541.20px;height:617.30px;background:#fff;overflow:hidden"></div>
<svg style="left:0;top:0" width="1600" height="843"><line x1="149.5" y1="176" x2="149.5" y2="203" stroke="#c6c6c6" stroke-width="1"/><line x1="270.5" y1="176" x2="270.5" y2="203" stroke="#c6c6c6" stroke-width="1"/><line x1="363.5" y1="176" x2="363.5" y2="203" stroke="#c6c6c6" stroke-width="1"/><line x1="473.5" y1="176" x2="473.5" y2="203" stroke="#c6c6c6" stroke-width="1"/><line x1="637.5" y1="176" x2="637.5" y2="203" stroke="#c6c6c6" stroke-width="1"/><line x1="730.5" y1="176" x2="730.5" y2="203" stroke="#c6c6c6" stroke-width="1"/><line x1="822.5" y1="176" x2="822.5" y2="203" stroke="#c6c6c6" stroke-width="1"/><line x1="915.5" y1="176" x2="915.5" y2="203" stroke="#c6c6c6" stroke-width="1"/><line x1="1007.5" y1="176" x2="1007.5" y2="203" stroke="#c6c6c6" stroke-width="1"/><line x1="1100.5" y1="176" x2="1100.5" y2="203" stroke="#c6c6c6" stroke-width="1"/><line x1="1193.5" y1="176" x2="1193.5" y2="203" stroke="#c6c6c6" stroke-width="1"/><line x1="1285.5" y1="176" x2="1285.5" y2="203" stroke="#c6c6c6" stroke-width="1"/><line x1="1378.5" y1="176" x2="1378.5" y2="203" stroke="#c6c6c6" stroke-width="1"/><line x1="1470.5" y1="176" x2="1470.5" y2="203" stroke="#c6c6c6" stroke-width="1"/><line x1="1563.5" y1="176" x2="1563.5" y2="203" stroke="#c6c6c6" stroke-width="1"/><line x1="149.5" y1="203" x2="149.5" y2="820.6" stroke="#dadada" stroke-width="1"/><line x1="270.5" y1="203" x2="270.5" y2="820.6" stroke="#dadada" stroke-width="1"/><line x1="363.5" y1="203" x2="363.5" y2="820.6" stroke="#dadada" stroke-width="1"/><line x1="473.5" y1="203" x2="473.5" y2="820.6" stroke="#dadada" stroke-width="1"/><line x1="637.5" y1="203" x2="637.5" y2="820.6" stroke="#dadada" stroke-width="1"/><line x1="730.5" y1="203" x2="730.5" y2="820.6" stroke="#dadada" stroke-width="1"/><line x1="822.5" y1="203" x2="822.5" y2="820.6" stroke="#dadada" stroke-width="1"/><line x1="915.5" y1="203" x2="915.5" y2="820.6" stroke="#dadada" stroke-width="1"/><line x1="1007.5" y1="203" x2="1007.5" y2="820.6" stroke="#dadada" stroke-width="1"/><line x1="1100.5" y1="203" x2="1100.5" y2="820.6" stroke="#dadada" stroke-width="1"/><line x1="1193.5" y1="203" x2="1193.5" y2="820.6" stroke="#dadada" stroke-width="1"/><line x1="1285.5" y1="203" x2="1285.5" y2="820.6" stroke="#dadada" stroke-width="1"/><line x1="1378.5" y1="203" x2="1378.5" y2="820.6" stroke="#dadada" stroke-width="1"/><line x1="1470.5" y1="203" x2="1470.5" y2="820.6" stroke="#dadada" stroke-width="1"/><line x1="1563.5" y1="203" x2="1563.5" y2="820.6" stroke="#dadada" stroke-width="1"/><line x1="39.4" y1="230.5" x2="1580.6" y2="230.5" stroke="#dadada" stroke-width="1"/><line x1="39.4" y1="258.5" x2="1580.6" y2="258.5" stroke="#dadada" stroke-width="1"/><line x1="39.4" y1="285.5" x2="1580.6" y2="285.5" stroke="#dadada" stroke-width="1"/><line x1="39.4" y1="313.5" x2="1580.6" y2="313.5" stroke="#dadada" stroke-width="1"/><line x1="39.4" y1="341.5" x2="1580.6" y2="341.5" stroke="#dadada" stroke-width="1"/><line x1="39.4" y1="368.5" x2="1580.6" y2="368.5" stroke="#dadada" stroke-width="1"/><line x1="39.4" y1="396.5" x2="1580.6" y2="396.5" stroke="#dadada" stroke-width="1"/><line x1="39.4" y1="423.5" x2="1580.6" y2="423.5" stroke="#dadada" stroke-width="1"/><line x1="39.4" y1="451.5" x2="1580.6" y2="451.5" stroke="#dadada" stroke-width="1"/><line x1="39.4" y1="478.5" x2="1580.6" y2="478.5" stroke="#dadada" stroke-width="1"/><line x1="39.4" y1="506.5" x2="1580.6" y2="506.5" stroke="#dadada" stroke-width="1"/><line x1="39.4" y1="533.5" x2="1580.6" y2="533.5" stroke="#dadada" stroke-width="1"/><line x1="39.4" y1="561.5" x2="1580.6" y2="561.5" stroke="#dadada" stroke-width="1"/><line x1="39.4" y1="588.5" x2="1580.6" y2="588.5" stroke="#dadada" stroke-width="1"/><line x1="39.4" y1="616.5" x2="1580.6" y2="616.5" stroke="#dadada" stroke-width="1"/><line x1="39.4" y1="644.5" x2="1580.6" y2="644.5" stroke="#dadada" stroke-width="1"/><line x1="39.4" y1="671.5" x2="1580.6" y2="671.5" stroke="#dadada" stroke-width="1"/><line x1="39.4" y1="699.5" x2="1580.6" y2="699.5" stroke="#dadada" stroke-width="1"/><line x1="39.4" y1="726.5" x2="1580.6" y2="726.5" stroke="#dadada" stroke-width="1"/><line x1="39.4" y1="754.5" x2="1580.6" y2="754.5" stroke="#dadada" stroke-width="1"/><line x1="39.4" y1="781.5" x2="1580.6" y2="781.5" stroke="#dadada" stroke-width="1"/><line x1="39.4" y1="809.5" x2="1580.6" y2="809.5" stroke="#dadada" stroke-width="1"/><line x1="0" y1="230.5" x2="39.4" y2="230.5" stroke="#c6c6c6" stroke-width="1"/><line x1="0" y1="258.5" x2="39.4" y2="258.5" stroke="#c6c6c6" stroke-width="1"/><line x1="0" y1="285.5" x2="39.4" y2="285.5" stroke="#c6c6c6" stroke-width="1"/><line x1="0" y1="313.5" x2="39.4" y2="313.5" stroke="#c6c6c6" stroke-width="1"/><line x1="0" y1="341.5" x2="39.4" y2="341.5" stroke="#c6c6c6" stroke-width="1"/><line x1="0" y1="368.5" x2="39.4" y2="368.5" stroke="#c6c6c6" stroke-width="1"/><line x1="0" y1="396.5" x2="39.4" y2="396.5" stroke="#c6c6c6" stroke-width="1"/><line x1="0" y1="423.5" x2="39.4" y2="423.5" stroke="#c6c6c6" stroke-width="1"/><line x1="0" y1="451.5" x2="39.4" y2="451.5" stroke="#c6c6c6" stroke-width="1"/><line x1="0" y1="478.5" x2="39.4" y2="478.5" stroke="#c6c6c6" stroke-width="1"/><line x1="0" y1="506.5" x2="39.4" y2="506.5" stroke="#c6c6c6" stroke-width="1"/><line x1="0" y1="533.5" x2="39.4" y2="533.5" stroke="#c6c6c6" stroke-width="1"/><line x1="0" y1="561.5" x2="39.4" y2="561.5" stroke="#c6c6c6" stroke-width="1"/><line x1="0" y1="588.5" x2="39.4" y2="588.5" stroke="#c6c6c6" stroke-width="1"/><line x1="0" y1="616.5" x2="39.4" y2="616.5" stroke="#c6c6c6" stroke-width="1"/><line x1="0" y1="644.5" x2="39.4" y2="644.5" stroke="#c6c6c6" stroke-width="1"/><line x1="0" y1="671.5" x2="39.4" y2="671.5" stroke="#c6c6c6" stroke-width="1"/><line x1="0" y1="699.5" x2="39.4" y2="699.5" stroke="#c6c6c6" stroke-width="1"/><line x1="0" y1="726.5" x2="39.4" y2="726.5" stroke="#c6c6c6" stroke-width="1"/><line x1="0" y1="754.5" x2="39.4" y2="754.5" stroke="#c6c6c6" stroke-width="1"/><line x1="0" y1="781.5" x2="39.4" y2="781.5" stroke="#c6c6c6" stroke-width="1"/><line x1="0" y1="809.5" x2="39.4" y2="809.5" stroke="#c6c6c6" stroke-width="1"/><line x1="0" y1="203.5" x2="1580.6" y2="203.5" stroke="#b9b9b9" stroke-width="1.2"/><line x1="39.5" y1="176" x2="39.5" y2="820.6" stroke="#b9b9b9" stroke-width="1.2"/><line x1="1580.5" y1="203" x2="1580.5" y2="820.6" stroke="#a0a0a0" stroke-width="1.5"/><line x1="270.4" y1="202.8" x2="363.6" y2="202.8" stroke="#217346" stroke-width="2"/><line x1="39.4" y1="230.84500000000003" x2="39.4" y2="258.39" stroke="#217346" stroke-width="2"/><rect x="271.0" y="231.04500000000002" width="92.80000000000004" height="27.34499999999996" fill="none" stroke="#217346" stroke-width="2"/><rect x="361.1" y="255.89" width="5" height="5" fill="#217346" stroke="#fff" stroke-width="1"/></svg>
<div class="t" style="left:34.40px;width:120px;text-align:center;top:209px;font-size:18.2px;font-weight:bold;color:#000;transform:scaleX(1.02);transform-origin:50% 0">Start</div>
<div class="t" style="left:149.90px;width:120px;text-align:center;top:209px;font-size:18.2px;font-weight:bold;color:#000;transform:scaleX(1.02);transform-origin:50% 0">End</div>
<div class="t" style="left:257.00px;width:120px;text-align:center;top:209px;font-size:18.2px;font-weight:bold;color:#000;transform:scaleX(1.02);transform-origin:50% 0">Fraction</div>
<div class="t" style="left:-5.00px;width:150px;text-align:right;top:237px;font-size:18.4px;color:#000;transform:scaleX(1.045);transform-origin:100% 0">05-03-2024</div>
<div class="t" style="left:116.40px;width:150px;text-align:right;top:237px;font-size:18.4px;color:#000;transform:scaleX(1.045);transform-origin:100% 0">21-10-2024</div>
<div class="t" style="left:208.60px;width:150px;text-align:right;top:237px;font-size:18.4px;color:#000;transform:scaleX(1.045);transform-origin:100% 0">0.62842</div>
<div class="t" style="left:-5.00px;width:150px;text-align:right;top:264px;font-size:18.4px;color:#000;transform:scaleX(1.045);transform-origin:100% 0">06-03-2024</div>
<div class="t" style="left:116.40px;width:150px;text-align:right;top:264px;font-size:18.4px;color:#000;transform:scaleX(1.045);transform-origin:100% 0">22-11-2024</div>
<div class="t" style="left:208.60px;width:150px;text-align:right;top:264px;font-size:18.4px;color:#000;transform:scaleX(1.045);transform-origin:100% 0">0.71311</div>
<div class="t" style="left:-5.00px;width:150px;text-align:right;top:292px;font-size:18.4px;color:#000;transform:scaleX(1.045);transform-origin:100% 0">07-03-2024</div>
<div class="t" style="left:116.40px;width:150px;text-align:right;top:292px;font-size:18.4px;color:#000;transform:scaleX(1.045);transform-origin:100% 0">23-12-2024</div>
<div class="t" style="left:208.60px;width:150px;text-align:right;top:292px;font-size:18.4px;color:#000;transform:scaleX(1.045);transform-origin:100% 0">0.79508</div>
<div class="t" style="left:-5.00px;width:150px;text-align:right;top:319px;font-size:18.4px;color:#000;transform:scaleX(1.045);transform-origin:100% 0">08-03-2024</div>
<div class="t" style="left:116.40px;width:150px;text-align:right;top:319px;font-size:18.4px;color:#000;transform:scaleX(1.045);transform-origin:100% 0">24-10-2024</div>
<div class="t" style="left:208.60px;width:150px;text-align:right;top:319px;font-size:18.4px;color:#000;transform:scaleX(1.045);transform-origin:100% 0">0.62842</div>
<div class="t" style="left:-5.00px;width:150px;text-align:right;top:347px;font-size:18.4px;color:#000;transform:scaleX(1.045);transform-origin:100% 0">09-03-2024</div>
<div class="t" style="left:116.40px;width:150px;text-align:right;top:347px;font-size:18.4px;color:#000;transform:scaleX(1.045);transform-origin:100% 0">25-01-2025</div>
<div class="t" style="left:208.60px;width:150px;text-align:right;top:347px;font-size:18.4px;color:#000;transform:scaleX(1.045);transform-origin:100% 0">0.88219</div>
<div class="t" style="left:-5.00px;width:150px;text-align:right;top:375px;font-size:18.4px;color:#000;transform:scaleX(1.045);transform-origin:100% 0">10-03-2024</div>
<div class="t" style="left:116.40px;width:150px;text-align:right;top:375px;font-size:18.4px;color:#000;transform:scaleX(1.045);transform-origin:100% 0">31-03-2025</div>
<div class="t" style="left:208.60px;width:150px;text-align:right;top:375px;font-size:18.4px;color:#000;transform:scaleX(1.045);transform-origin:100% 0">1.05609</div>
<div class="t" style="left:-5.00px;width:150px;text-align:right;top:402px;font-size:18.4px;color:#000;transform:scaleX(1.045);transform-origin:100% 0">11-03-2024</div>
<div class="t" style="left:116.40px;width:150px;text-align:right;top:402px;font-size:18.4px;color:#000;transform:scaleX(1.045);transform-origin:100% 0">27-03-2025</div>
<div class="t" style="left:208.60px;width:150px;text-align:right;top:402px;font-size:18.4px;color:#000;transform:scaleX(1.045);transform-origin:100% 0">1.04241</div>
<div class="t" style="left:-5.00px;width:150px;text-align:right;top:430px;font-size:18.4px;color:#000;transform:scaleX(1.045);transform-origin:100% 0">12-03-2024</div>
<div class="t" style="left:116.40px;width:150px;text-align:right;top:430px;font-size:18.4px;color:#000;transform:scaleX(1.045);transform-origin:100% 0">28-02-2025</div>
<div class="t" style="left:208.60px;width:150px;text-align:right;top:430px;font-size:18.4px;color:#000;transform:scaleX(1.045);transform-origin:100% 0">0.96712</div>
<div class="t" style="left:-5.00px;width:150px;text-align:right;top:457px;font-size:18.4px;color:#000;transform:scaleX(1.045);transform-origin:100% 0">13-03-2024</div>
<div class="t" style="left:116.40px;width:150px;text-align:right;top:457px;font-size:18.4px;color:#000;transform:scaleX(1.045);transform-origin:100% 0">29-05-2025</div>
<div class="t" style="left:208.60px;width:150px;text-align:right;top:457px;font-size:18.4px;color:#000;transform:scaleX(1.045);transform-origin:100% 0">1.2093</div>
<div class="t" style="left:-5.00px;width:150px;text-align:right;top:485px;font-size:18.4px;color:#000;transform:scaleX(1.045);transform-origin:100% 0">14-03-2024</div>
<div class="t" style="left:116.40px;width:150px;text-align:right;top:485px;font-size:18.4px;color:#000;transform:scaleX(1.045);transform-origin:100% 0">30-12-2025</div>
<div class="t" style="left:208.60px;width:150px;text-align:right;top:485px;font-size:18.4px;color:#000;transform:scaleX(1.045);transform-origin:100% 0">1.7948</div>
<div class="a" style="left:0;top:820.60px;width:1600px;height:22.40px;background:#e6e6e6"></div>
<div class="a" style="left:1581px;top:176px;width:19px;height:644.60px;background:#e6e6e6"></div>
<div class="a" style="left:0;top:820px;width:1581px;height:1px;background:#b8b8b8"></div>
<svg style="left:22px;top:829px" width="32" height="8"><path d="M6.2 0.5 L6.2 7 L1.2 3.75 Z" fill="#bdbdbd"/><path d="M46.8 0.5 L46.8 7 L51.8 3.75 Z" transform="translate(-22 0)" fill="#bdbdbd"/></svg>
<div class="a" style="left:85.5px;top:820px;width:66px;height:21.5px;background:#fff;border-left:1px solid #c6c6c6;border-right:1px solid #c6c6c6"></div>
<div class="a" style="left:85.5px;top:839.5px;width:66px;height:2px;background:#217346"></div>
<div class="t" style="left:96.30px;top:824.00px;font-size:12.99px;color:#217346;font-weight:bold;transform:scaleX(1.0396);transform-origin:0 0;">Sheet1</div>
<svg style="left:178px;top:823px" width="20" height="20"><circle cx="9.5" cy="9.6" r="7.8" fill="none" stroke="#666" stroke-width="1.1"/><path d="M9.5 5.5 L9.5 13.7 M5.4 9.6 L13.6 9.6" stroke="#444" stroke-width="1.3"/></svg>
<div class="a" style="left:958px;top:826.5px;width:2px;height:2px;background:#8a8a8a;box-shadow:0 4px 0 #8a8a8a,0 8px 0 #8a8a8a"></div>
<div class="a" style="left:973.5px;top:824.7px;width:608px;height:16px;background:#f0f0f0"></div>
<div class="a" style="left:973.5px;top:824.7px;width:16.5px;height:16px;background:#fff;border:1px solid #ababab"></div>
<svg style="left:979px;top:829px" width="6" height="8"><path d="M5 0.5 L5 7.5 L0.8 4 Z" fill="#222"/></svg>
<div class="a" style="left:989px;top:824.7px;width:537.5px;height:16px;background:#fff;border:1px solid #ababab"></div>
<div class="a" style="left:1565px;top:824.7px;width:16px;height:16px;background:#fff;border:1px solid #ababab"></div>
<svg style="left:1570.5px;top:829px" width="6" height="8"><path d="M0.8 0.5 L0.8 7.5 L5 4 Z" fill="#222"/></svg>
<div class="a" style="left:1583.3px;top:177px;width:15.5px;height:643.5px;background:#f0f0f0"></div>
<div class="a" style="left:1583.3px;top:177px;width:15.5px;height:16px;background:#fff;border:1px solid #ababab"></div>
<svg style="left:1587.5px;top:181px" width="9" height="6"><path d="M0.3 5 L8.2 5 L4.25 1 Z" fill="#222"/></svg>
<div class="a" style="left:1583.3px;top:192.5px;width:15.5px;height:584px;background:#fff;border:1px solid #ababab"></div>
<div class="a" style="left:1583.3px;top:805.5px;width:15.5px;height:15.5px;background:#fff;border:1px solid #ababab"></div>
<svg style="left:1587.5px;top:811px" width="8" height="6"><path d="M0.5 0.8 L7.5 0.8 L4 4.8 Z" fill="#222"/></svg>
</body></html>
